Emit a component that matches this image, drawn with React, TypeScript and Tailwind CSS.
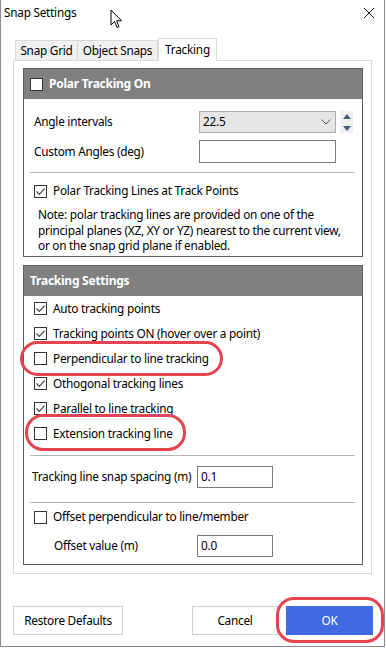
const font = { fontFamily: '"Noto Sans", "Open Sans", sans-serif' };

const Check = ({ checked = false }: { checked?: boolean }) => (
  <span className="w-[13px] h-[13px] border border-[#333333] bg-white flex items-center justify-center shrink-0">
    {checked && (
      <svg width="11" height="11" viewBox="0 0 11 11">
        <path d="M1.5 5.5 L4.3 8.3 L9.6 2.6" fill="none" stroke="#444444" strokeWidth="1.2" />
      </svg>
    )}
  </span>
);

const Row = ({ label, checked }: { label: string; checked?: boolean }) => (
  <div className="h-[25px] flex items-center gap-[6px] pl-[10px]">
    <Check checked={checked} />
    <span className="whitespace-nowrap">{label}</span>
  </div>
);

const Header = ({ title, box }: { title: string; box?: boolean }) => (
  <div className="h-[30px] bg-[#808080] flex items-center gap-[6px] pl-[6px] text-white font-bold text-[12px]">
    {box && <Check />}
    <span>{title}</span>
  </div>
);

const Separator = () => <div className="h-px bg-[#b4b4b4] ml-[6px] mr-[7px]" />;

const Oval = ({ className }: { className: string }) => (
  <div className={`absolute border-[3px] border-[#e5434d] rounded-[18px] pointer-events-none ${className}`} />
);

const App = () => {
  return (
    <div className="relative w-[386px] h-[648px] bg-white overflow-hidden text-[11.8px] tracking-[-0.25px] text-black" style={font}>
      <div className="w-[385px] h-[647px] border-l border-r border-b border-[#8a8a8a] flex flex-col">
        {/* title bar */}
        <div className="h-[38px] flex items-start justify-between pl-[3px] pr-[9px] pt-[4px]">
          <span>Snap Settings</span>
          <svg width="12" height="12" viewBox="0 0 12 12" className="mt-[3px]">
            <path d="M1 1 L11 11 M11 1 L1 11" stroke="#111" strokeWidth="1" />
          </svg>
        </div>

        {/* tabs */}
        <div className="h-[22px] flex items-end pl-[14px] relative z-10">
          <div className="h-[20px] w-[63px] bg-[#f0f0f0] border border-b-0 border-[#d9d9d9] flex items-center justify-center">Snap Grid</div>
          <div className="h-[20px] w-[80px] bg-[#f0f0f0] border border-b-0 border-l-0 border-[#d9d9d9] flex items-center justify-center">Object Snaps</div>
          <div className="h-[23px] w-[59px] -mb-px bg-white border border-b-0 border-[#d9d9d9] flex items-start justify-center pt-[2px]">Tracking</div>
        </div>

        {/* pane */}
        <div className="ml-[12px] w-[359px] h-[514px] border border-[#d9d9d9] pt-[7px] pl-[9px] pr-[8px] flex flex-col gap-[8px]">
          {/* polar tracking group */}
          <div className="h-[189px] border border-[#5f5f5f] flex flex-col">
            <Header title="Polar Tracking On" box />
            <div className="flex items-center pl-[10px] mt-[12px] h-[22px]">
              <span className="w-[165px]">Angle intervals</span>
              <div className="w-[137px] h-[22px] bg-[#e5e5e5] border border-[#adadad] flex items-center justify-between pl-[3px] pr-[4px]">
                <span>22.5</span>
                <svg width="10" height="6" viewBox="0 0 10 6">
                  <path d="M0.5 0.5 L5 5 L9.5 0.5" fill="none" stroke="#555" strokeWidth="1" />
                </svg>
              </div>
              <div className="ml-[4px] w-[13px] h-[22px] bg-[#f0f0f0] flex flex-col items-center justify-center gap-[7px]">
                <svg width="8" height="5" viewBox="0 0 8 5"><path d="M0 5 L4 0 L8 5 Z" fill="#4d5b78" /></svg>
                <svg width="8" height="5" viewBox="0 0 8 5"><path d="M0 0 L4 5 L8 0 Z" fill="#4d5b78" /></svg>
              </div>
            </div>
            <div className="flex items-center pl-[10px] mt-[7px] h-[23px]">
              <span className="w-[165px]">Custom Angles (deg)</span>
              <div className="w-[137px] h-[23px] border border-[#7a7a7a] bg-white" />
            </div>
            <div className="mt-[9px]">
              <Separator />
            </div>
            <div className="h-[20px] mt-[8px] flex items-center gap-[6px] pl-[10px]">
              <Check checked />
              <span>Polar Tracking Lines at Track Points</span>
            </div>
            <p className="pl-[14px] pr-[4px] mt-[6px] leading-[15.5px] whitespace-nowrap">
              Note: polar tracking lines are provided on one of the
              <br />
              principal planes (XZ, XY or YZ) nearest to the current view,
              <br />
              or on the snap grid plane if enabled.
            </p>
          </div>

          {/* tracking settings group */}
          <div className="h-[300px] border border-[#5f5f5f] flex flex-col">
            <Header title="Tracking Settings" />
            <Row label="Auto tracking points" checked />
            <Row label="Tracking points ON (hover over a point)" checked />
            <Row label="Perpendicular to line tracking" />
            <Row label="Othogonal tracking lines" checked />
            <Row label="Parallel to line tracking" checked />
            <Row label="Extension tracking line" />
            <div className="mt-[9px]">
              <Separator />
            </div>
            <div className="flex items-center pl-[8px] mt-[10px] h-[22px]">
              <span className="w-[165px] whitespace-nowrap">Tracking line snap spacing (m)</span>
              <div className="w-[76px] h-[22px] border border-[#7a7a7a] flex items-center pl-[3px]">0.1</div>
            </div>
            <div className="mt-[14px]">
              <Separator />
            </div>
            <div className="h-[20px] mt-[4px] flex items-center gap-[6px] pl-[10px]">
              <Check />
              <span className="whitespace-nowrap">Offset perpendicular to line/member</span>
            </div>
            <div className="flex items-center pl-[30px] mt-[8px] h-[22px]">
              <span className="w-[143px]">Offset value (m)</span>
              <div className="w-[76px] h-[22px] border border-[#7a7a7a] flex items-center pl-[3px]">0.0</div>
            </div>
          </div>
        </div>

        {/* buttons */}
        <div className="mt-[32px] flex justify-between pl-[12px] pr-[11px]">
          <button className="w-[110px] h-[29px] border border-[#d0d0d0] bg-white">Restore Defaults</button>
          <div className="flex gap-[8px]">
            <button className="w-[86px] h-[29px] border border-[#d0d0d0] bg-white">Cancel</button>
            <button className="w-[87px] h-[29px] bg-[#4169e1] text-white">OK</button>
          </div>
        </div>
      </div>

      {/* mouse pointer */}
      <svg className="absolute left-[110px] top-[9px]" width="13" height="20" viewBox="0 0 13 20">
        <path d="M1 1 L1 16 L4.5 12.5 L7 18.5 L9 17.6 L6.6 11.8 L11.5 11.8 Z" fill="#fff" stroke="#000" strokeWidth="1" strokeLinejoin="round" />
      </svg>

      {/* annotations */}
      <Oval className="left-[20px] top-[341px] w-[203px] h-[35px]" />
      <Oval className="left-[25px] top-[414px] w-[161px] h-[37px]" />
      <Oval className="left-[276px] top-[597px] w-[108px] h-[46px]" />
    </div>
  );
};

export default App;
